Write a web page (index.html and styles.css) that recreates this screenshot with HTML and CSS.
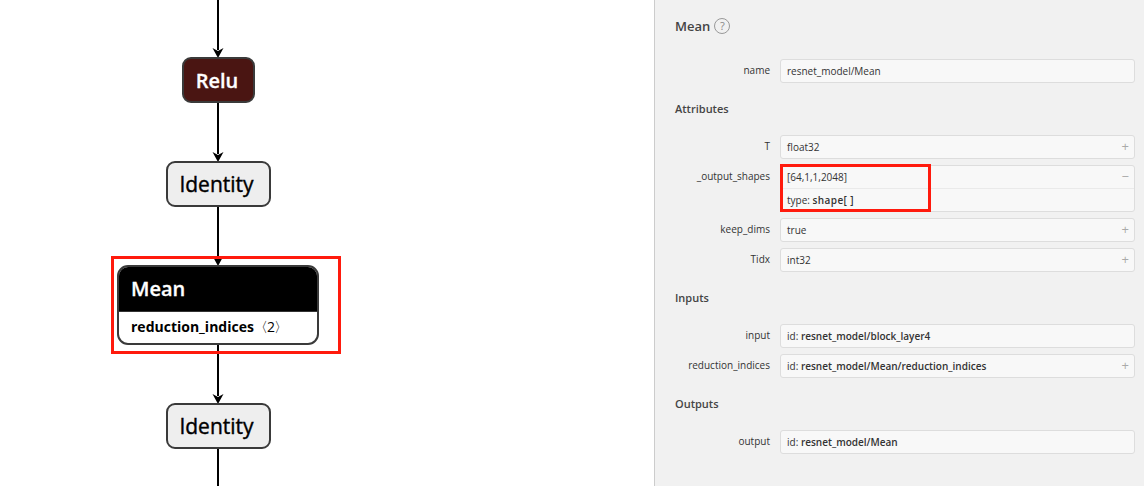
FILE: index.html
```html
<!DOCTYPE html>
<html lang="en">
<head>
  <meta charset="UTF-8">
  <title>Mean</title>
  <link rel="stylesheet" href="styles.css">
</head>
<body>
  <!-- Graph -->
  <main class="graph">
    <svg class="edges" width="654" height="486" viewBox="0 0 654 486">
      <defs>
        <path id="arrow" d="M0 0 L-5.5 -10 L0 -7 L5.5 -10 Z"></path>
      </defs>
      <line x1="218" y1="0" x2="218" y2="50"></line>
      <use href="#arrow" x="218" y="58"></use>
      <line x1="218" y1="102" x2="218" y2="154"></line>
      <use href="#arrow" x="218" y="162"></use>
      <line x1="218" y1="206" x2="218" y2="258"></line>
      <use href="#arrow" x="218" y="266"></use>
      <line x1="218" y1="344" x2="218" y2="396"></line>
      <use href="#arrow" x="218" y="404"></use>
      <line x1="218" y1="448" x2="218" y2="486"></line>
    </svg>

    <div class="node node-relu">Relu</div>
    <div class="node node-identity node-identity-1">Identity</div>
    <div class="node-mean">
      <div class="mean-title">Mean</div>
      <div class="mean-attr"><b>reduction_indices</b><span>〈2〉</span></div>
    </div>
    <div class="node node-identity node-identity-2">Identity</div>
    <div class="mark mark-node"></div>
  </main>

  <!-- Properties panel -->
  <aside class="panel">
    <h1 class="panel-title">Mean <span class="help">?</span></h1>

    <div class="row">
      <label>name</label>
      <div class="value">resnet_model/Mean</div>
    </div>

    <h2>Attributes</h2>
    <div class="rows">
      <div class="row">
        <label>T</label>
        <div class="value">float32<span class="toggle">+</span></div>
      </div>
      <div class="row">
        <label>_output_shapes</label>
        <div class="value value-open">
          [64,1,1,2048]<span class="toggle">−</span>
          <div class="value-type">type: <b class="type-name">shape[ ]</b></div>
          <div class="mark mark-shapes"></div>
        </div>
      </div>
      <div class="row">
        <label>keep_dims</label>
        <div class="value">true<span class="toggle">+</span></div>
      </div>
      <div class="row">
        <label>Tidx</label>
        <div class="value">int32<span class="toggle">+</span></div>
      </div>
    </div>

    <h2>Inputs</h2>
    <div class="rows">
      <div class="row">
        <label>input</label>
        <div class="value">id: <b>resnet_model/block_layer4</b></div>
      </div>
      <div class="row">
        <label>reduction_indices</label>
        <div class="value">id: <b>resnet_model/Mean/reduction_indices</b><span class="toggle">+</span></div>
      </div>
    </div>

    <h2>Outputs</h2>
    <div class="row">
      <label>output</label>
      <div class="value">id: <b>resnet_model/Mean</b></div>
    </div>
  </aside>
</body>
</html>
```

FILE: styles.css
```css
* {
  margin: 0;
  padding: 0;
  box-sizing: border-box;
}

html, body {
  height: 100%;
  overflow: hidden;
}

body {
  display: flex;
  font-family: "Open Sans", sans-serif;
  background: #fff;
  color: #000;
}

/* Graph */
.graph {
  position: relative;
  width: 654px;
  height: 486px;
  flex: none;
}

.edges {
  position: absolute;
  left: 0;
  top: 0;
}

.edges line {
  stroke: #000;
  stroke-width: 2;
}

.node {
  position: absolute;
  height: 46px;
  display: flex;
  align-items: center;
  justify-content: center;
  border: 2px solid #3a3a3a;
  border-radius: 9px;
  font-size: 21px;
}

.node-relu {
  left: 182px;
  top: 57px;
  width: 73px;
  padding-right: 3px;
  background: #4a1512;
  color: #fff;
  font-size: 20px;
  font-weight: 600;
  -webkit-text-stroke: 0.3px #fff;
}

.node-identity {
  left: 166px;
  width: 105px;
  padding-right: 4px;
  background: #eee;
  -webkit-text-stroke: 0.4px #000;
}

.node-identity-1 {
  top: 161px;
}

.node-identity-2 {
  top: 403px;
}

.node-mean {
  position: absolute;
  left: 117px;
  top: 265px;
  width: 202px;
  height: 80px;
  border: 2px solid #3a3a3a;
  border-radius: 11px;
  background: #fff;
  overflow: hidden;
}

.mean-title {
  height: 45px;
  padding: 0 12px;
  line-height: 43px;
  background: #000;
  color: #fff;
  font-size: 20px;
  font-weight: 600;
  -webkit-text-stroke: 0.3px #fff;
  border-bottom: 1px solid #333;
}

.mean-attr {
  padding: 0 12px;
  line-height: 29px;
  font-size: 14px;
}

.mean-attr b {
  font-weight: 700;
}

.mean-attr span {
  letter-spacing: -1px;
}

.mark {
  position: absolute;
  border: 3px solid #ff1a0d;
}

.mark-node {
  left: 111px;
  top: 256px;
  width: 230px;
  height: 98px;
}

/* Properties panel */
.panel {
  flex: 1;
  height: 486px;
  padding: 16px 9px 0 20px;
  background: #f1f1f1;
  border-left: 1px solid #ccc;
  color: #333;
}

.panel-title {
  display: flex;
  align-items: center;
  gap: 4px;
  height: 20px;
  margin-bottom: 23px;
  font-size: 13px;
  font-weight: 600;
  color: #444;
}

.help {
  width: 16px;
  height: 16px;
  border: 1px solid #999;
  border-radius: 50%;
  text-align: center;
  line-height: 14px;
  font-size: 11px;
  font-weight: 500;
  color: #888;
}

.panel h2 {
  height: 20px;
  margin: 16px 0;
  line-height: 20px;
  font-size: 11px;
  font-weight: 600;
  color: #444;
}

.rows {
  display: flex;
  flex-direction: column;
  gap: 6px;
}

.row {
  display: flex;
  align-items: flex-start;
}

.row label {
  width: 95px;
  flex: none;
  line-height: 22px;
  text-align: right;
  font-size: 10px;
}

.value {
  position: relative;
  flex: 1;
  min-height: 24px;
  margin-left: 10px;
  padding-left: 6px;
  line-height: 22px;
  font-size: 10px;
  background: #f8f8f8;
  border: 1px solid #ddd;
  border-radius: 3px;
}

.value b {
  font-weight: 600;
}

.value .type-name {
  letter-spacing: 0.4px;
}

.value-type {
  margin-left: -6px;
  padding-left: 6px;
  border-top: 1px solid #eaeaea;
}

.toggle {
  position: absolute;
  right: 5px;
  top: -1px;
  color: #aaa;
  font-size: 13px;
}

.mark-shapes {
  left: -1px;
  top: -2px;
  width: 151px;
  height: 48px;
}
```
